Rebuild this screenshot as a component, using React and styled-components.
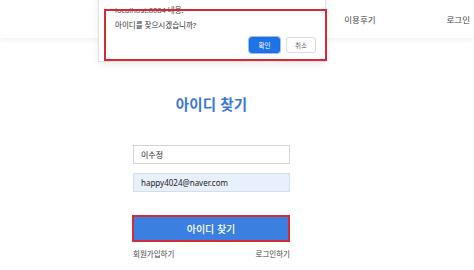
import React from 'react';
import styled, { createGlobalStyle } from 'styled-components';

const GlobalStyle = createGlobalStyle`
  html, body {
    margin: 0;
    padding: 0;
    background: #fff;
    font-family: "Noto Sans", "Noto Sans CJK KR", sans-serif;
  }
`

const Page = styled.div`
  position: relative;
  width: 474px;
  height: 270px;
  overflow: hidden;
  background: #fff;
`

const Header = styled.header`
  height: 38px;
  display: flex;
  align-items: center;
  justify-content: flex-end;
  gap: 71px;
  padding-right: 4px;
  background: #fff;
  box-shadow: 0 2px 6px rgba(0, 0, 0, 0.06);
`

const NavLink = styled.span`
  font-size: 8.5px;
  color: #444;
`

const Main = styled.main`
  width: 157px;
  margin-left: 133px;
  display: flex;
  flex-direction: column;
`

const Title = styled.h1`
  margin: 56px 0 0;
  text-align: center;
  font-size: 14.5px;
  font-weight: 700;
  color: #3a78d0;
  line-height: 20px;
  letter-spacing: 0.2px;
`

const Field = styled.div`
  box-sizing: border-box;
  height: 19px;
  margin-top: ${props => props.first ? '31px' : '9px'};
  padding-left: 7px;
  display: flex;
  align-items: center;
  font-size: 8px;
  color: #222;
  border: 1px solid ${props => props.filled ? '#d6dde8' : '#d5d5d5'};
  background: ${props => props.filled ? '#e8f0fe' : '#fff'};
`

const SubmitButton = styled.button`
  box-sizing: border-box;
  margin-top: 23px;
  margin-left: -1px;
  width: 158px;
  height: 27px;
  border: 2px solid #d42a36;
  background: #3b7fe0;
  color: #fff;
  font-family: inherit;
  font-size: 10px;
  font-weight: 500;
  padding: 0;
`

const Links = styled.div`
  margin-top: 6px;
  display: flex;
  justify-content: space-between;
  font-size: 7.5px;
  color: #444;
`

const Dialog = styled.div`
  position: absolute;
  left: 98px;
  top: -4px;
  width: 228px;
  height: 66px;
  box-sizing: border-box;
  background: #fff;
  border: 1px solid #e2e2e2;
  border-top: none;
  box-shadow: 0 2px 8px rgba(0, 0, 0, 0.08);
  padding: 8px 0 0 16px;
  display: flex;
  flex-direction: column;
`

const Origin = styled.div`
  font-size: 7.5px;
  color: #444;
  line-height: 12px;
`

const Message = styled.div`
  margin-top: 4px;
  font-size: 7.5px;
  color: #333;
  line-height: 10px;
`

const Actions = styled.div`
  margin-top: 7px;
  display: flex;
  justify-content: flex-end;
  gap: 6px;
  padding-right: 9px;
`

const DialogButton = styled.button`
  box-sizing: border-box;
  width: ${props => props.primary ? '31px' : '30px'};
  height: 16px;
  padding: 0;
  border-radius: 3px;
  font-family: inherit;
  font-size: 6.5px;
  border: 1px solid ${props => props.primary ? '#1a6fe0' : '#dadce0'};
  background: ${props => props.primary ? '#1f73e6' : '#fff'};
  color: ${props => props.primary ? '#fff' : '#5f6368'};
  box-shadow: ${props => props.primary ? '0 0 0 1px #9ec2f5' : 'none'};
`

const Highlight = styled.div`
  position: absolute;
  left: 5px;
  top: 13px;
  width: 223px;
  height: 52px;
  box-sizing: border-box;
  border: 2px solid #d42a36;
  pointer-events: none;
`

export default function App() {
  return (
    <Page>
      <GlobalStyle />
      <Header>
        <NavLink>이용후기</NavLink>
        <NavLink>로그인</NavLink>
      </Header>
      <Main>
        <Title>아이디 찾기</Title>
        <Field first>이수정</Field>
        <Field filled>happy4024@naver.com</Field>
        <SubmitButton>아이디 찾기</SubmitButton>
        <Links>
          <span>회원가입하기</span>
          <span>로그인하기</span>
        </Links>
      </Main>
      <Dialog>
        <Origin>localhost:8084 내용:</Origin>
        <Message>아이디를 찾으시겠습니까?</Message>
        <Actions>
          <DialogButton primary>확인</DialogButton>
          <DialogButton>취소</DialogButton>
        </Actions>
        <Highlight />
      </Dialog>
    </Page>
  );
}
